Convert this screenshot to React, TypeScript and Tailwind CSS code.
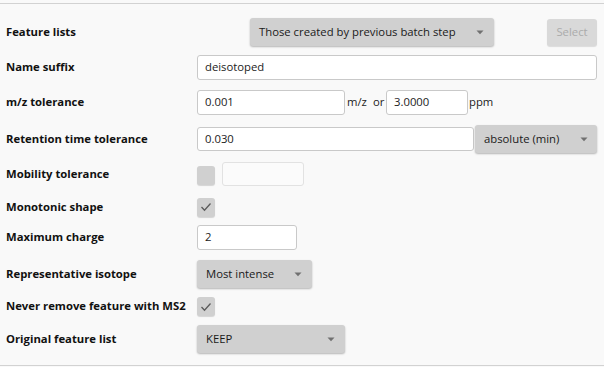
import React from "react";

const font = { fontFamily: '"Open Sans", "Noto Sans", sans-serif' };

function Arrow() {
  return (
    <svg width="8" height="5" viewBox="0 0 8 5" className="shrink-0">
      <polygon points="0.5,0.5 7.5,0.5 4,4.3" fill="#707070" />
    </svg>
  );
}

function Combo({ text, className, padR }: { text: string; className: string; padR: string }) {
  return (
    <div
      className={`flex items-center justify-between rounded-[3px] bg-[#d0d0d0] shadow-[0_1px_2px_rgba(0,0,0,0.28)] text-[11.3px] text-[#1a1a1a] pl-[9px] ${padR} ${className}`}
    >
      <span className="whitespace-nowrap">{text}</span>
      <Arrow />
    </div>
  );
}

function Input({ value, className }: { value: string; className: string }) {
  return (
    <div
      className={`flex items-center rounded-[3px] border border-[#c9c9c9] bg-white pl-[7px] text-[11.3px] text-[#222] ${className}`}
    >
      {value}
    </div>
  );
}

function Check({ checked, className = "" }: { checked: boolean; className?: string }) {
  return (
    <div
      className={`flex h-[19px] w-[18px] items-center justify-center rounded-[3px] bg-[#d0d0d0] shadow-[0_1px_1px_rgba(0,0,0,0.15)] ${className}`}
    >
      {checked && (
        <svg width="12" height="10" viewBox="0 0 12 10">
          <polyline points="1.5,5 4.5,8.2 10.5,1.5" fill="none" stroke="#5a5a5a" strokeWidth="1.3" />
        </svg>
      )}
    </div>
  );
}

function Row({ label, mt, h, children }: { label: string; mt: string; h: string; children?: React.ReactNode }) {
  return (
    <div className={`flex items-center ${mt} ${h}`}>
      <div className="w-[191px] shrink-0 text-[11.3px] font-bold text-[#111] whitespace-nowrap">{label}</div>
      <div className="flex h-full flex-1 items-center">{children}</div>
    </div>
  );
}

export default function App() {
  return (
    <div className="h-[367px] w-[604px] overflow-hidden bg-[#f9f9f9]" style={font}>
      <div className="mt-[3px] h-[363px] border-t border-b border-[#d2d2d2] pl-[6px] pr-[7px]">
        <Row label="Feature lists" mt="mt-[14px]" h="h-[28px]">
          <Combo text="Those created by previous batch step" className="ml-[53px] h-[28px] w-[244px]" padR="pr-[10px]" />
          <div className="ml-[53px] flex h-[27px] w-[50px] items-center justify-center rounded-[3px] bg-[#d9d9d9] text-[11.3px] text-[#ababab] shadow-[0_1px_1px_rgba(0,0,0,0.12)]">
            Select
          </div>
        </Row>
        <Row label="Name suffix" mt="mt-[9px]" h="h-[25px]">
          <Input value="deisotoped" className="h-[25px] w-[400px]" />
        </Row>
        <Row label="m/z tolerance" mt="mt-[10px]" h="h-[25px]">
          <Input value="0.001" className="h-[25px] w-[148px]" />
          <span className="ml-[2px] w-[26px] text-[11.3px] text-[#222]">m/z</span>
          <span className="w-[13px] text-[11.3px] text-[#222]">or</span>
          <Input value="3.0000" className="h-[25px] w-[82px]" />
          <span className="ml-[1px] text-[11.3px] text-[#222]">ppm</span>
        </Row>
        <Row label="Retention time tolerance" mt="mt-[10px]" h="h-[28px]">
          <Input value="0.030" className="h-[24px] w-[277px]" />
          <Combo text="absolute (min)" className="ml-[1px] h-[28px] w-[122px]" padR="pr-[9px]" />
        </Row>
        <Row label="Mobility tolerance" mt="mt-[9px]" h="h-[24px]">
          <Check checked={false} className="mt-[2px]" />
          <div className="ml-[7px] h-[24px] w-[82px] rounded-[3px] border border-[#e2e2e2] bg-[#fbfbfb]" />
        </Row>
        <Row label="Monotonic shape" mt="mt-[11px]" h="h-[20px]">
          <Check checked />
        </Row>
        <Row label="Maximum charge" mt="mt-[8px]" h="h-[25px]">
          <Input value="2" className="h-[25px] w-[100px]" />
        </Row>
        <Row label="Representative isotope" mt="mt-[10px]" h="h-[28px]">
          <Combo text="Most intense" className="h-[28px] w-[115px]" padR="pr-[10px]" />
        </Row>
        <Row label="Never remove feature with MS2" mt="mt-[9px]" h="h-[19px]">
          <Check checked />
        </Row>
        <Row label="Original feature list" mt="mt-[9px]" h="h-[28px]">
          <Combo text="KEEP" className="h-[28px] w-[148px]" padR="pr-[10px]" />
        </Row>
      </div>
    </div>
  );
}
